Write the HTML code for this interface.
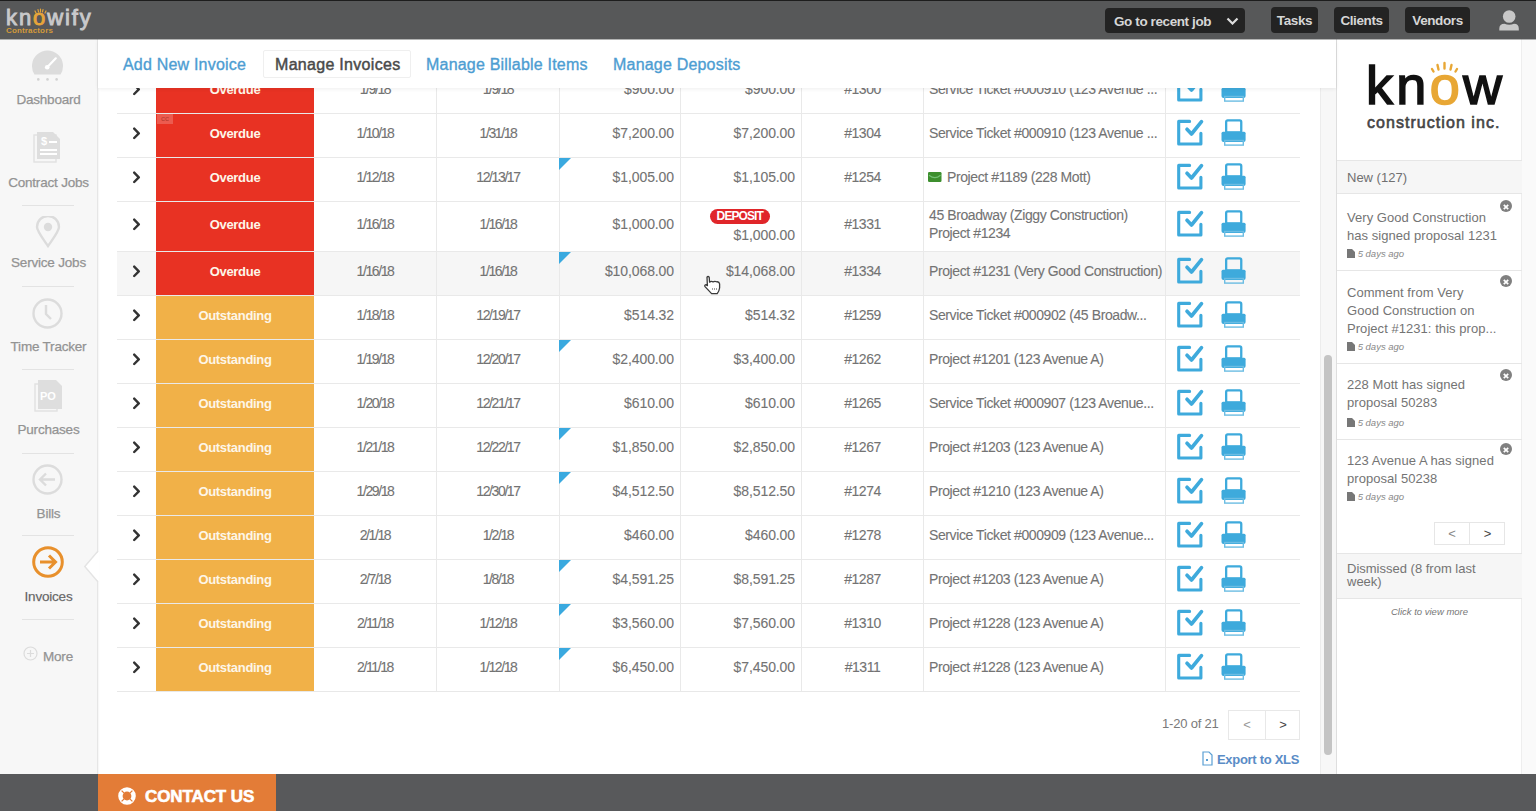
<!DOCTYPE html>
<html><head><meta charset="utf-8">
<style>
*{box-sizing:border-box;margin:0;padding:0}
html,body{width:1536px;height:811px;overflow:hidden;background:#fff;font-family:"Liberation Sans",sans-serif;color:#666}
.abs{position:absolute}
#topline{position:absolute;left:0;top:0;width:1536px;height:2px;background:#1d1d1d}
#header{position:absolute;left:0;top:1px;width:1536px;height:38px;background:#575859;box-shadow:0 1px 0 rgba(87,88,89,0.45);z-index:6}
.logo{position:absolute;left:6px;top:5px;font-size:22px;line-height:24px;font-weight:normal;-webkit-text-stroke:0.9px #c9c9cb;color:#c9c9cb;letter-spacing:1.9px}
.hbtn{position:absolute;top:6px;height:26px;background:#232323;border-radius:4px;color:#d6d6d6;font-size:13.5px;font-weight:bold;line-height:27px;text-align:center;letter-spacing:-0.4px}
#sidebar{position:absolute;left:0;top:39px;width:98px;height:735px;background:#f7f7f7;border-right:1px solid #e6e6e6;box-shadow:1px 0 1px rgba(0,0,0,0.03)}
.sb{position:absolute;left:0;width:97px;text-align:center;font-size:13.5px;color:#939393;-webkit-text-stroke:0.25px #939393;letter-spacing:-0.2px}
.sep{position:absolute;left:22px;width:52px;height:1px;background:#e3e3e3}
#tabs{position:absolute;left:98px;top:39px;width:1238px;height:49px;background:#fff;box-shadow:0 1px 4px rgba(0,0,0,0.07);z-index:5}
.tab{position:absolute;top:12px;height:28px;line-height:28px;font-size:16px;color:#4d9dd2;-webkit-text-stroke:0.35px #4d9dd2;letter-spacing:0.2px}
.tab.act{top:11px;border:1px solid #efefef;color:#4a4a4a;-webkit-text-stroke:0.45px #4a4a4a;border-radius:2px;letter-spacing:0.3px}
#tablewrap{position:absolute;left:98px;top:39px;width:1222px;height:735px;overflow:hidden}
.row{position:absolute;left:19px;width:1183px;border-top:1px solid #e9e9e9;font-size:14px;color:#737373;-webkit-text-stroke:0.1px #737373}
.row.hov{background:#f6f6f6}
.c{position:absolute;top:0;height:100%;display:flex;align-items:center;padding-bottom:5px}
.chev{left:0;width:39px;justify-content:center}
.st{left:39px;width:158px;justify-content:center;color:#fdf6e8;font-weight:bold;font-size:13px;top:0;height:100%;padding-bottom:4px;letter-spacing:-0.3px;-webkit-text-stroke:0}
.st.od{background:#e83223}
.st.os{background:#f1b148}
.d1{left:197px;width:122px;justify-content:center;letter-spacing:-1.4px}
.d2{left:319px;width:123px;justify-content:center;border-left:1px solid #e9e9e9;letter-spacing:-1.4px}
.amt{left:442px;width:122px;justify-content:flex-end;padding-right:7px;border-left:1px solid #e9e9e9;letter-spacing:-0.1px}
.bal{left:563px;width:121px;justify-content:flex-end;padding-right:6px;border-left:1px solid #e9e9e9;letter-spacing:-0.1px}
.num{left:684px;width:122px;justify-content:center;border-left:1px solid #e9e9e9;letter-spacing:-0.5px}
.desc{left:806px;width:243px;justify-content:flex-start;padding-left:5px;border-left:1px solid #e9e9e9;white-space:nowrap;letter-spacing:-0.4px}
.desc.two{line-height:18px}
.act{left:1048px;width:135px;border-left:1px solid #e9e9e9}
.ic{position:absolute;top:calc(50% - 17px)}
.ck{left:10px}
.pr{left:54px}
.tri{position:absolute;left:-1px;top:0;width:0;height:0;border-top:12px solid #3aa9df;border-right:12px solid transparent}
.bal.dep{flex-direction:column;align-items:flex-end;justify-content:flex-start}
.badge{display:inline-block;margin-top:7px;height:15px;line-height:15px;padding:0 7px;border-radius:8px;background:#e0262a;color:#fff;font-weight:bold;font-size:12px;letter-spacing:-0.9px;margin-right:25px;-webkit-text-stroke:0}
.dv{margin-top:3px}
#footrows{position:absolute;left:117px;top:691px;width:1183px;height:1px;background:#e8e8e8}
#scroll{position:absolute;left:1320px;top:88px;width:16px;height:686px;background:#f7f7f7;border-left:1px solid #ececec}
#thumb{position:absolute;left:1324px;top:355px;width:8px;height:400px;border-radius:4px;background:#c4c4c4}
#panel{position:absolute;left:1336px;top:39px;width:186px;height:735px;background:#fff;border-left:1px solid #dedede;border-right:1px solid #eeeeee}
#pstrip{position:absolute;left:1522px;top:39px;width:14px;height:735px;background:#fafafa}
.card{position:absolute;left:0;width:185px;border-top:1px solid #e6e6e6;font-size:13px;color:#747474;line-height:18px}
.card .txt{position:absolute;left:10px;top:12px;width:170px;letter-spacing:0.05px;white-space:nowrap}
.card .ago{position:absolute;left:10px;font-size:9.5px;font-style:italic;color:#888}
.card .x{position:absolute;left:163px;width:12px;height:12px;border-radius:50%;background:#808080}
#footer{position:absolute;left:0;top:774px;width:1536px;height:37px;background:#58595b}
#contact{position:absolute;left:98px;top:774px;width:178px;height:37px;background:#e37c37;color:#fff;font-weight:bold;font-size:17px}
</style></head><body>
<div id="topline"></div>
<div id="header">
  <div class="logo">kn<span style="color:#e6a53a;-webkit-text-stroke:0.9px #e6a53a">o</span>wify</div><svg class="abs" style="left:34px;top:7px" width="13" height="6" viewBox="0 0 13 6"><path d="M2 5L1 3M4.5 4L4 1.5M6.5 4V1M8.5 4L9 1.5M11 5L12 3" stroke="#e6a53a" stroke-width="1.2" stroke-linecap="round"/></svg><div class="abs" style="left:6px;top:26px;font-size:8px;font-weight:bold;color:#d49a3a;letter-spacing:0.15px;transform:scaleY(0.8);transform-origin:0 0">Contractors</div>
  <div class="hbtn" style="left:1105px;width:140px;top:7px;height:25px;line-height:27px;text-align:left;padding-left:9px">Go to recent job<svg style="position:absolute;left:121px;top:9px" width="13" height="8" viewBox="0 0 13 8"><path d="M1.5 1.5L6.5 6.5L11.5 1.5" fill="none" stroke="#ddd" stroke-width="2.2"/></svg></div>
  <div class="hbtn" style="left:1271px;width:47px">Tasks</div>
  <div class="hbtn" style="left:1334px;width:55px">Clients</div>
  <div class="hbtn" style="left:1405px;width:65px">Vendors</div>
  <svg class="abs" style="left:1499px;top:8px" width="21" height="22" viewBox="0 0 21 22"><circle cx="10.2" cy="7.5" r="6.3" fill="#c8c8c8"/><path d="M0.3 21.6V19.5Q0.3 15 5.5 14.8Q10.2 16.5 15 14.8Q19.8 15 19.8 19.5V21.6Z" fill="#c8c8c8"/></svg>
</div>

<div id="sidebar">
  <svg class="abs" style="left:31px;top:10px" width="34" height="34" viewBox="0 0 34 34"><path d="M3.47 25.4A15.5 15.5 0 1 1 29.53 25.4Z" fill="#dcdcdc"/><path d="M16.2 18.2L24.8 9.3" stroke="#fff" stroke-width="2.2" stroke-linecap="round"/><circle cx="16.2" cy="18.2" r="2.3" fill="#fff"/><circle cx="7.3" cy="30.4" r="1.3" fill="#d2d2d2"/><circle cx="16.5" cy="30.4" r="1.3" fill="#d2d2d2"/><circle cx="25.6" cy="30.4" r="1.3" fill="#d2d2d2"/></svg>
  <div class="sb" style="top:53px">Dashboard</div>
  <svg class="abs" style="left:33px;top:92px" width="30" height="32" viewBox="0 0 30 32"><rect x="1" y="4" width="22" height="27" fill="none" stroke="#e2e2e2" stroke-width="1.5"/><path d="M4 1H20L27 8V28H4Z" fill="#dedede"/><text x="8" y="14" font-size="11" font-weight="bold" fill="#fff" font-family="Liberation Sans">$</text><rect x="16" y="10" width="8" height="2" fill="#fff"/><rect x="7" y="18" width="17" height="2" fill="#fff"/><rect x="7" y="22" width="17" height="2" fill="#fff"/></svg>
  <div class="sb" style="top:136px">Contract Jobs</div>
  <div class="sep" style="top:166px"></div>
  <svg class="abs" style="left:35px;top:177px" width="26" height="32" viewBox="0 0 26 32"><path d="M13 30C6 20 2 15 2 11A11 11 0 0 1 24 11C24 15 20 20 13 30Z" fill="none" stroke="#dcdcdc" stroke-width="2.4"/><circle cx="13" cy="11" r="4.2" fill="#dcdcdc"/></svg>
  <div class="sb" style="top:216px">Service Jobs</div>
  <div class="sep" style="top:247px"></div>
  <svg class="abs" style="left:32px;top:259px" width="31" height="31" viewBox="0 0 31 31"><circle cx="15.5" cy="15.5" r="14" fill="none" stroke="#dcdcdc" stroke-width="2.4"/><path d="M14 7V16L19 21" fill="none" stroke="#dcdcdc" stroke-width="2.4"/></svg>
  <div class="sb" style="top:300px">Time Tracker</div>
  <div class="sep" style="top:330px"></div>
  <svg class="abs" style="left:34px;top:340px" width="29" height="33" viewBox="0 0 29 33"><rect x="1" y="5" width="22" height="27" fill="none" stroke="#e2e2e2" stroke-width="1.5"/><path d="M4 1H22L28 7V30H4Z" fill="#dedede"/><text x="6" y="21" font-size="11" font-weight="bold" fill="#fff" font-family="Liberation Sans">PO</text></svg>
  <div class="sb" style="top:383px">Purchases</div>
  <div class="sep" style="top:414px"></div>
  <svg class="abs" style="left:32px;top:425px" width="31" height="31" viewBox="0 0 31 31"><circle cx="15.5" cy="15.5" r="14" fill="none" stroke="#dcdcdc" stroke-width="2.4"/><path d="M23 15.5H9M14 9.5L8 15.5L14 21.5" fill="none" stroke="#dcdcdc" stroke-width="2.4"/></svg>
  <div class="sb" style="top:467px">Bills</div>
  <div class="sep" style="top:496px"></div>
  <svg class="abs" style="left:32px;top:507px" width="32" height="32" viewBox="0 0 32 32"><circle cx="16" cy="16" r="14.3" fill="none" stroke="#e8902c" stroke-width="3"/><path d="M8 16H23M17 9.5L23.5 16L17 22.5" fill="none" stroke="#e8902c" stroke-width="3"/></svg>
  <div class="sb" style="top:550px;color:#555">Invoices</div>
  <div class="sep" style="top:580px"></div>
  <svg class="abs" style="left:23px;top:607px" width="15" height="15" viewBox="0 0 15 15"><circle cx="7.5" cy="7.5" r="6.5" fill="none" stroke="#dcdcdc" stroke-width="1.2"/><path d="M7.5 4V11M4 7.5H11" stroke="#dcdcdc" stroke-width="1.2"/></svg>
  <div class="sb" style="top:610px;left:43px;width:auto;text-align:left">More</div>
</div>
<svg class="abs" style="left:84px;top:551px;z-index:3" width="15" height="31" viewBox="0 0 15 31"><path d="M15 0L0.8 15.5L15 31Z" fill="#fff"/><path d="M14 0L0.8 15.5L14 31" fill="none" stroke="#e4e4e4" stroke-width="1.4"/></svg>

<div id="tablewrap">
<div class="row" style="top:30px;height:44px"><div class="c chev"><svg width="9" height="13" viewBox="0 0 9 13"><path d="M2.2 1.6L6.8 6.3L2.2 11" fill="none" stroke="#333" stroke-width="2.4" stroke-linecap="round" stroke-linejoin="round"/></svg></div><div class="c st od">Overdue</div><div class="c d1">1/9/18</div><div class="c d2">1/9/18</div><div class="c amt"><span>$900.00</span></div><div class="c bal"><span>$900.00</span></div><div class="c num">#1300</div><div class="c desc">Service Ticket #000910 (123 Avenue ...</div><div class="c act"><svg class="ic ck" width="30" height="28" viewBox="0 0 30 28"><path d="M13.6 2.4H2.7V25H24.9V14.3" fill="none" stroke="#3eaadc" stroke-width="3.1" stroke-linejoin="round" stroke-linecap="round"/><path d="M11 10.2L15.5 15L25.5 2.6" fill="none" stroke="#3eaadc" stroke-width="3.6" stroke-linecap="round" stroke-linejoin="round"/></svg><svg class="ic pr" width="28" height="28" viewBox="0 0 28 28"><rect x="6.15" y="1.45" width="15.1" height="12" rx="1.5" fill="none" stroke="#3eaadc" stroke-width="2.3"/><path d="M1.5 14.2Q1.5 12.7 3 12.7H24.1Q25.6 12.7 25.6 14.2V21Q25.6 23 23.6 23H3.5Q1.5 23 1.5 21Z" fill="#3eaadc"/><rect x="4.7" y="21.5" width="18.6" height="4.6" fill="none" stroke="#6cbde3" stroke-width="1.4"/></svg></div></div>
<div class="row" style="top:74px;height:44px"><div class="c chev"><svg width="9" height="13" viewBox="0 0 9 13"><path d="M2.2 1.6L6.8 6.3L2.2 11" fill="none" stroke="#333" stroke-width="2.4" stroke-linecap="round" stroke-linejoin="round"/></svg></div><div class="c st od">Overdue</div><div class="c d1">1/10/18</div><div class="c d2">1/31/18</div><div class="c amt"><span>$7,200.00</span></div><div class="c bal"><span>$7,200.00</span></div><div class="c num">#1304</div><div class="c desc">Service Ticket #000910 (123 Avenue ...</div><div class="c act"><svg class="ic ck" width="30" height="28" viewBox="0 0 30 28"><path d="M13.6 2.4H2.7V25H24.9V14.3" fill="none" stroke="#3eaadc" stroke-width="3.1" stroke-linejoin="round" stroke-linecap="round"/><path d="M11 10.2L15.5 15L25.5 2.6" fill="none" stroke="#3eaadc" stroke-width="3.6" stroke-linecap="round" stroke-linejoin="round"/></svg><svg class="ic pr" width="28" height="28" viewBox="0 0 28 28"><rect x="6.15" y="1.45" width="15.1" height="12" rx="1.5" fill="none" stroke="#3eaadc" stroke-width="2.3"/><path d="M1.5 14.2Q1.5 12.7 3 12.7H24.1Q25.6 12.7 25.6 14.2V21Q25.6 23 23.6 23H3.5Q1.5 23 1.5 21Z" fill="#3eaadc"/><rect x="4.7" y="21.5" width="18.6" height="4.6" fill="none" stroke="#6cbde3" stroke-width="1.4"/></svg></div></div>
<div class="row" style="top:118px;height:44px"><div class="c chev"><svg width="9" height="13" viewBox="0 0 9 13"><path d="M2.2 1.6L6.8 6.3L2.2 11" fill="none" stroke="#333" stroke-width="2.4" stroke-linecap="round" stroke-linejoin="round"/></svg></div><div class="c st od">Overdue</div><div class="c d1">1/12/18</div><div class="c d2">12/13/17</div><div class="c amt"><i class="tri"></i><span>$1,005.00</span></div><div class="c bal"><span>$1,105.00</span></div><div class="c num">#1254</div><div class="c desc"><svg width="14" height="10" viewBox="0 0 14 10" style="margin-left:-1px;margin-right:5px"><rect x="0" y="0" width="13.5" height="10" rx="1.2" fill="#3d8f2e"/><path d="M1 3.2Q7 8 12.5 3.2" fill="none" stroke="#74c274" stroke-width="1.2"/></svg>Project #1189 (228 Mott)</div><div class="c act"><svg class="ic ck" width="30" height="28" viewBox="0 0 30 28"><path d="M13.6 2.4H2.7V25H24.9V14.3" fill="none" stroke="#3eaadc" stroke-width="3.1" stroke-linejoin="round" stroke-linecap="round"/><path d="M11 10.2L15.5 15L25.5 2.6" fill="none" stroke="#3eaadc" stroke-width="3.6" stroke-linecap="round" stroke-linejoin="round"/></svg><svg class="ic pr" width="28" height="28" viewBox="0 0 28 28"><rect x="6.15" y="1.45" width="15.1" height="12" rx="1.5" fill="none" stroke="#3eaadc" stroke-width="2.3"/><path d="M1.5 14.2Q1.5 12.7 3 12.7H24.1Q25.6 12.7 25.6 14.2V21Q25.6 23 23.6 23H3.5Q1.5 23 1.5 21Z" fill="#3eaadc"/><rect x="4.7" y="21.5" width="18.6" height="4.6" fill="none" stroke="#6cbde3" stroke-width="1.4"/></svg></div></div>
<div class="row" style="top:162px;height:50px"><div class="c chev"><svg width="9" height="13" viewBox="0 0 9 13"><path d="M2.2 1.6L6.8 6.3L2.2 11" fill="none" stroke="#333" stroke-width="2.4" stroke-linecap="round" stroke-linejoin="round"/></svg></div><div class="c st od">Overdue</div><div class="c d1">1/16/18</div><div class="c d2">1/16/18</div><div class="c amt"><span>$1,000.00</span></div><div class="c bal dep"><span class="badge">DEPOSIT</span><span class="dv">$1,000.00</span></div><div class="c num">#1331</div><div class="c desc two">45 Broadway (Ziggy Construction)<br>Project #1234</div><div class="c act"><svg class="ic ck" width="30" height="28" viewBox="0 0 30 28"><path d="M13.6 2.4H2.7V25H24.9V14.3" fill="none" stroke="#3eaadc" stroke-width="3.1" stroke-linejoin="round" stroke-linecap="round"/><path d="M11 10.2L15.5 15L25.5 2.6" fill="none" stroke="#3eaadc" stroke-width="3.6" stroke-linecap="round" stroke-linejoin="round"/></svg><svg class="ic pr" width="28" height="28" viewBox="0 0 28 28"><rect x="6.15" y="1.45" width="15.1" height="12" rx="1.5" fill="none" stroke="#3eaadc" stroke-width="2.3"/><path d="M1.5 14.2Q1.5 12.7 3 12.7H24.1Q25.6 12.7 25.6 14.2V21Q25.6 23 23.6 23H3.5Q1.5 23 1.5 21Z" fill="#3eaadc"/><rect x="4.7" y="21.5" width="18.6" height="4.6" fill="none" stroke="#6cbde3" stroke-width="1.4"/></svg></div></div>
<div class="row hov" style="top:212px;height:44px"><div class="c chev"><svg width="9" height="13" viewBox="0 0 9 13"><path d="M2.2 1.6L6.8 6.3L2.2 11" fill="none" stroke="#333" stroke-width="2.4" stroke-linecap="round" stroke-linejoin="round"/></svg></div><div class="c st od">Overdue</div><div class="c d1">1/16/18</div><div class="c d2">1/16/18</div><div class="c amt"><i class="tri"></i><span>$10,068.00</span></div><div class="c bal"><span>$14,068.00</span></div><div class="c num">#1334</div><div class="c desc">Project #1231 (Very Good Construction)</div><div class="c act"><svg class="ic ck" width="30" height="28" viewBox="0 0 30 28"><path d="M13.6 2.4H2.7V25H24.9V14.3" fill="none" stroke="#3eaadc" stroke-width="3.1" stroke-linejoin="round" stroke-linecap="round"/><path d="M11 10.2L15.5 15L25.5 2.6" fill="none" stroke="#3eaadc" stroke-width="3.6" stroke-linecap="round" stroke-linejoin="round"/></svg><svg class="ic pr" width="28" height="28" viewBox="0 0 28 28"><rect x="6.15" y="1.45" width="15.1" height="12" rx="1.5" fill="none" stroke="#3eaadc" stroke-width="2.3"/><path d="M1.5 14.2Q1.5 12.7 3 12.7H24.1Q25.6 12.7 25.6 14.2V21Q25.6 23 23.6 23H3.5Q1.5 23 1.5 21Z" fill="#3eaadc"/><rect x="4.7" y="21.5" width="18.6" height="4.6" fill="none" stroke="#6cbde3" stroke-width="1.4"/></svg></div></div>
<div class="row" style="top:256px;height:44px"><div class="c chev"><svg width="9" height="13" viewBox="0 0 9 13"><path d="M2.2 1.6L6.8 6.3L2.2 11" fill="none" stroke="#333" stroke-width="2.4" stroke-linecap="round" stroke-linejoin="round"/></svg></div><div class="c st os">Outstanding</div><div class="c d1">1/18/18</div><div class="c d2">12/19/17</div><div class="c amt"><span>$514.32</span></div><div class="c bal"><span>$514.32</span></div><div class="c num">#1259</div><div class="c desc">Service Ticket #000902 (45 Broadw...</div><div class="c act"><svg class="ic ck" width="30" height="28" viewBox="0 0 30 28"><path d="M13.6 2.4H2.7V25H24.9V14.3" fill="none" stroke="#3eaadc" stroke-width="3.1" stroke-linejoin="round" stroke-linecap="round"/><path d="M11 10.2L15.5 15L25.5 2.6" fill="none" stroke="#3eaadc" stroke-width="3.6" stroke-linecap="round" stroke-linejoin="round"/></svg><svg class="ic pr" width="28" height="28" viewBox="0 0 28 28"><rect x="6.15" y="1.45" width="15.1" height="12" rx="1.5" fill="none" stroke="#3eaadc" stroke-width="2.3"/><path d="M1.5 14.2Q1.5 12.7 3 12.7H24.1Q25.6 12.7 25.6 14.2V21Q25.6 23 23.6 23H3.5Q1.5 23 1.5 21Z" fill="#3eaadc"/><rect x="4.7" y="21.5" width="18.6" height="4.6" fill="none" stroke="#6cbde3" stroke-width="1.4"/></svg></div></div>
<div class="row" style="top:300px;height:44px"><div class="c chev"><svg width="9" height="13" viewBox="0 0 9 13"><path d="M2.2 1.6L6.8 6.3L2.2 11" fill="none" stroke="#333" stroke-width="2.4" stroke-linecap="round" stroke-linejoin="round"/></svg></div><div class="c st os">Outstanding</div><div class="c d1">1/19/18</div><div class="c d2">12/20/17</div><div class="c amt"><i class="tri"></i><span>$2,400.00</span></div><div class="c bal"><span>$3,400.00</span></div><div class="c num">#1262</div><div class="c desc">Project #1201 (123 Avenue A)</div><div class="c act"><svg class="ic ck" width="30" height="28" viewBox="0 0 30 28"><path d="M13.6 2.4H2.7V25H24.9V14.3" fill="none" stroke="#3eaadc" stroke-width="3.1" stroke-linejoin="round" stroke-linecap="round"/><path d="M11 10.2L15.5 15L25.5 2.6" fill="none" stroke="#3eaadc" stroke-width="3.6" stroke-linecap="round" stroke-linejoin="round"/></svg><svg class="ic pr" width="28" height="28" viewBox="0 0 28 28"><rect x="6.15" y="1.45" width="15.1" height="12" rx="1.5" fill="none" stroke="#3eaadc" stroke-width="2.3"/><path d="M1.5 14.2Q1.5 12.7 3 12.7H24.1Q25.6 12.7 25.6 14.2V21Q25.6 23 23.6 23H3.5Q1.5 23 1.5 21Z" fill="#3eaadc"/><rect x="4.7" y="21.5" width="18.6" height="4.6" fill="none" stroke="#6cbde3" stroke-width="1.4"/></svg></div></div>
<div class="row" style="top:344px;height:44px"><div class="c chev"><svg width="9" height="13" viewBox="0 0 9 13"><path d="M2.2 1.6L6.8 6.3L2.2 11" fill="none" stroke="#333" stroke-width="2.4" stroke-linecap="round" stroke-linejoin="round"/></svg></div><div class="c st os">Outstanding</div><div class="c d1">1/20/18</div><div class="c d2">12/21/17</div><div class="c amt"><span>$610.00</span></div><div class="c bal"><span>$610.00</span></div><div class="c num">#1265</div><div class="c desc">Service Ticket #000907 (123 Avenue...</div><div class="c act"><svg class="ic ck" width="30" height="28" viewBox="0 0 30 28"><path d="M13.6 2.4H2.7V25H24.9V14.3" fill="none" stroke="#3eaadc" stroke-width="3.1" stroke-linejoin="round" stroke-linecap="round"/><path d="M11 10.2L15.5 15L25.5 2.6" fill="none" stroke="#3eaadc" stroke-width="3.6" stroke-linecap="round" stroke-linejoin="round"/></svg><svg class="ic pr" width="28" height="28" viewBox="0 0 28 28"><rect x="6.15" y="1.45" width="15.1" height="12" rx="1.5" fill="none" stroke="#3eaadc" stroke-width="2.3"/><path d="M1.5 14.2Q1.5 12.7 3 12.7H24.1Q25.6 12.7 25.6 14.2V21Q25.6 23 23.6 23H3.5Q1.5 23 1.5 21Z" fill="#3eaadc"/><rect x="4.7" y="21.5" width="18.6" height="4.6" fill="none" stroke="#6cbde3" stroke-width="1.4"/></svg></div></div>
<div class="row" style="top:388px;height:44px"><div class="c chev"><svg width="9" height="13" viewBox="0 0 9 13"><path d="M2.2 1.6L6.8 6.3L2.2 11" fill="none" stroke="#333" stroke-width="2.4" stroke-linecap="round" stroke-linejoin="round"/></svg></div><div class="c st os">Outstanding</div><div class="c d1">1/21/18</div><div class="c d2">12/22/17</div><div class="c amt"><i class="tri"></i><span>$1,850.00</span></div><div class="c bal"><span>$2,850.00</span></div><div class="c num">#1267</div><div class="c desc">Project #1203 (123 Avenue A)</div><div class="c act"><svg class="ic ck" width="30" height="28" viewBox="0 0 30 28"><path d="M13.6 2.4H2.7V25H24.9V14.3" fill="none" stroke="#3eaadc" stroke-width="3.1" stroke-linejoin="round" stroke-linecap="round"/><path d="M11 10.2L15.5 15L25.5 2.6" fill="none" stroke="#3eaadc" stroke-width="3.6" stroke-linecap="round" stroke-linejoin="round"/></svg><svg class="ic pr" width="28" height="28" viewBox="0 0 28 28"><rect x="6.15" y="1.45" width="15.1" height="12" rx="1.5" fill="none" stroke="#3eaadc" stroke-width="2.3"/><path d="M1.5 14.2Q1.5 12.7 3 12.7H24.1Q25.6 12.7 25.6 14.2V21Q25.6 23 23.6 23H3.5Q1.5 23 1.5 21Z" fill="#3eaadc"/><rect x="4.7" y="21.5" width="18.6" height="4.6" fill="none" stroke="#6cbde3" stroke-width="1.4"/></svg></div></div>
<div class="row" style="top:432px;height:44px"><div class="c chev"><svg width="9" height="13" viewBox="0 0 9 13"><path d="M2.2 1.6L6.8 6.3L2.2 11" fill="none" stroke="#333" stroke-width="2.4" stroke-linecap="round" stroke-linejoin="round"/></svg></div><div class="c st os">Outstanding</div><div class="c d1">1/29/18</div><div class="c d2">12/30/17</div><div class="c amt"><i class="tri"></i><span>$4,512.50</span></div><div class="c bal"><span>$8,512.50</span></div><div class="c num">#1274</div><div class="c desc">Project #1210 (123 Avenue A)</div><div class="c act"><svg class="ic ck" width="30" height="28" viewBox="0 0 30 28"><path d="M13.6 2.4H2.7V25H24.9V14.3" fill="none" stroke="#3eaadc" stroke-width="3.1" stroke-linejoin="round" stroke-linecap="round"/><path d="M11 10.2L15.5 15L25.5 2.6" fill="none" stroke="#3eaadc" stroke-width="3.6" stroke-linecap="round" stroke-linejoin="round"/></svg><svg class="ic pr" width="28" height="28" viewBox="0 0 28 28"><rect x="6.15" y="1.45" width="15.1" height="12" rx="1.5" fill="none" stroke="#3eaadc" stroke-width="2.3"/><path d="M1.5 14.2Q1.5 12.7 3 12.7H24.1Q25.6 12.7 25.6 14.2V21Q25.6 23 23.6 23H3.5Q1.5 23 1.5 21Z" fill="#3eaadc"/><rect x="4.7" y="21.5" width="18.6" height="4.6" fill="none" stroke="#6cbde3" stroke-width="1.4"/></svg></div></div>
<div class="row" style="top:476px;height:44px"><div class="c chev"><svg width="9" height="13" viewBox="0 0 9 13"><path d="M2.2 1.6L6.8 6.3L2.2 11" fill="none" stroke="#333" stroke-width="2.4" stroke-linecap="round" stroke-linejoin="round"/></svg></div><div class="c st os">Outstanding</div><div class="c d1">2/1/18</div><div class="c d2">1/2/18</div><div class="c amt"><span>$460.00</span></div><div class="c bal"><span>$460.00</span></div><div class="c num">#1278</div><div class="c desc">Service Ticket #000909 (123 Avenue...</div><div class="c act"><svg class="ic ck" width="30" height="28" viewBox="0 0 30 28"><path d="M13.6 2.4H2.7V25H24.9V14.3" fill="none" stroke="#3eaadc" stroke-width="3.1" stroke-linejoin="round" stroke-linecap="round"/><path d="M11 10.2L15.5 15L25.5 2.6" fill="none" stroke="#3eaadc" stroke-width="3.6" stroke-linecap="round" stroke-linejoin="round"/></svg><svg class="ic pr" width="28" height="28" viewBox="0 0 28 28"><rect x="6.15" y="1.45" width="15.1" height="12" rx="1.5" fill="none" stroke="#3eaadc" stroke-width="2.3"/><path d="M1.5 14.2Q1.5 12.7 3 12.7H24.1Q25.6 12.7 25.6 14.2V21Q25.6 23 23.6 23H3.5Q1.5 23 1.5 21Z" fill="#3eaadc"/><rect x="4.7" y="21.5" width="18.6" height="4.6" fill="none" stroke="#6cbde3" stroke-width="1.4"/></svg></div></div>
<div class="row" style="top:520px;height:44px"><div class="c chev"><svg width="9" height="13" viewBox="0 0 9 13"><path d="M2.2 1.6L6.8 6.3L2.2 11" fill="none" stroke="#333" stroke-width="2.4" stroke-linecap="round" stroke-linejoin="round"/></svg></div><div class="c st os">Outstanding</div><div class="c d1">2/7/18</div><div class="c d2">1/8/18</div><div class="c amt"><i class="tri"></i><span>$4,591.25</span></div><div class="c bal"><span>$8,591.25</span></div><div class="c num">#1287</div><div class="c desc">Project #1203 (123 Avenue A)</div><div class="c act"><svg class="ic ck" width="30" height="28" viewBox="0 0 30 28"><path d="M13.6 2.4H2.7V25H24.9V14.3" fill="none" stroke="#3eaadc" stroke-width="3.1" stroke-linejoin="round" stroke-linecap="round"/><path d="M11 10.2L15.5 15L25.5 2.6" fill="none" stroke="#3eaadc" stroke-width="3.6" stroke-linecap="round" stroke-linejoin="round"/></svg><svg class="ic pr" width="28" height="28" viewBox="0 0 28 28"><rect x="6.15" y="1.45" width="15.1" height="12" rx="1.5" fill="none" stroke="#3eaadc" stroke-width="2.3"/><path d="M1.5 14.2Q1.5 12.7 3 12.7H24.1Q25.6 12.7 25.6 14.2V21Q25.6 23 23.6 23H3.5Q1.5 23 1.5 21Z" fill="#3eaadc"/><rect x="4.7" y="21.5" width="18.6" height="4.6" fill="none" stroke="#6cbde3" stroke-width="1.4"/></svg></div></div>
<div class="row" style="top:564px;height:44px"><div class="c chev"><svg width="9" height="13" viewBox="0 0 9 13"><path d="M2.2 1.6L6.8 6.3L2.2 11" fill="none" stroke="#333" stroke-width="2.4" stroke-linecap="round" stroke-linejoin="round"/></svg></div><div class="c st os">Outstanding</div><div class="c d1">2/11/18</div><div class="c d2">1/12/18</div><div class="c amt"><i class="tri"></i><span>$3,560.00</span></div><div class="c bal"><span>$7,560.00</span></div><div class="c num">#1310</div><div class="c desc">Project #1228 (123 Avenue A)</div><div class="c act"><svg class="ic ck" width="30" height="28" viewBox="0 0 30 28"><path d="M13.6 2.4H2.7V25H24.9V14.3" fill="none" stroke="#3eaadc" stroke-width="3.1" stroke-linejoin="round" stroke-linecap="round"/><path d="M11 10.2L15.5 15L25.5 2.6" fill="none" stroke="#3eaadc" stroke-width="3.6" stroke-linecap="round" stroke-linejoin="round"/></svg><svg class="ic pr" width="28" height="28" viewBox="0 0 28 28"><rect x="6.15" y="1.45" width="15.1" height="12" rx="1.5" fill="none" stroke="#3eaadc" stroke-width="2.3"/><path d="M1.5 14.2Q1.5 12.7 3 12.7H24.1Q25.6 12.7 25.6 14.2V21Q25.6 23 23.6 23H3.5Q1.5 23 1.5 21Z" fill="#3eaadc"/><rect x="4.7" y="21.5" width="18.6" height="4.6" fill="none" stroke="#6cbde3" stroke-width="1.4"/></svg></div></div>
<div class="row" style="top:608px;height:44px"><div class="c chev"><svg width="9" height="13" viewBox="0 0 9 13"><path d="M2.2 1.6L6.8 6.3L2.2 11" fill="none" stroke="#333" stroke-width="2.4" stroke-linecap="round" stroke-linejoin="round"/></svg></div><div class="c st os">Outstanding</div><div class="c d1">2/11/18</div><div class="c d2">1/12/18</div><div class="c amt"><i class="tri"></i><span>$6,450.00</span></div><div class="c bal"><span>$7,450.00</span></div><div class="c num">#1311</div><div class="c desc">Project #1228 (123 Avenue A)</div><div class="c act"><svg class="ic ck" width="30" height="28" viewBox="0 0 30 28"><path d="M13.6 2.4H2.7V25H24.9V14.3" fill="none" stroke="#3eaadc" stroke-width="3.1" stroke-linejoin="round" stroke-linecap="round"/><path d="M11 10.2L15.5 15L25.5 2.6" fill="none" stroke="#3eaadc" stroke-width="3.6" stroke-linecap="round" stroke-linejoin="round"/></svg><svg class="ic pr" width="28" height="28" viewBox="0 0 28 28"><rect x="6.15" y="1.45" width="15.1" height="12" rx="1.5" fill="none" stroke="#3eaadc" stroke-width="2.3"/><path d="M1.5 14.2Q1.5 12.7 3 12.7H24.1Q25.6 12.7 25.6 14.2V21Q25.6 23 23.6 23H3.5Q1.5 23 1.5 21Z" fill="#3eaadc"/><rect x="4.7" y="21.5" width="18.6" height="4.6" fill="none" stroke="#6cbde3" stroke-width="1.4"/></svg></div></div>
</div>
<div id="footrows"></div>
<svg class="abs" style="left:703px;top:275px;z-index:4" width="18" height="20" viewBox="0 0 18 20"><path d="M4 2.2Q5 0.8 6.2 2.2L6.6 7.2Q8 5.8 10 6.8Q12 5.8 13.6 6.8Q16.2 6.4 16.6 8.8L16.6 13Q16.2 16 14.2 18.6L8.6 18.6L2 11.6Q1.2 10 3 9.6L4.4 10.6Z" fill="#fff" stroke="#3a3a3a" stroke-width="1.3" stroke-linejoin="round"/><path d="M9.5 13V15M11.5 13V15M13.5 13V15" stroke="#888" stroke-width="0.8"/></svg>
<div class="abs" style="left:157px;top:114px;width:16px;height:10px;background:rgba(255,255,255,0.2);font-size:8px;line-height:10px;color:rgba(120,20,10,0.5);z-index:2;text-align:center">cc</div>

<div id="tabs">
  <div class="tab" style="left:25px">Add New Invoice</div>
  <div class="tab act" style="left:165px;width:148px;padding-left:11px">Manage Invoices</div>
  <div class="tab" style="left:328px">Manage Billable Items</div>
  <div class="tab" style="left:515px">Manage Deposits</div>
</div>

<div id="scroll"></div>
<div id="thumb"></div>

<div id="panel">
  <div class="abs" style="left:29px;top:16px;font-size:54px;font-weight:normal;-webkit-text-stroke:1.6px #111;color:#111;letter-spacing:3.3px;line-height:60px">kn<span style="color:#e8a735;-webkit-text-stroke:1.6px #e8a735">o</span>w</div>
  <svg class="abs" style="left:93px;top:22px" width="30" height="14" viewBox="0 0 30 14"><path d="M3.5 10.5L2 8M8.5 8.5L7.5 4M14.5 7.5V2M20.5 8.5L21.5 4M25.5 10.5L27 8" stroke="#e8a735" stroke-width="2.4" stroke-linecap="round"/></svg>
  <div class="abs" style="left:30px;top:75px;font-size:16px;font-weight:normal;-webkit-text-stroke:0.6px #444;color:#444;letter-spacing:1.05px">construction inc.</div>
  <div class="abs" style="left:0;top:121px;width:185px;height:33px;background:#f6f6f6;border-top:1px solid #e6e6e6;font-size:13px;color:#707070;padding:9px 0 0 10px">New (127)</div>
  <div class="card" style="top:154px;height:77px"><div class="txt" style="top:15px">Very Good Construction<br>has signed proposal 1231</div><div class="ago" style="top:51px"><svg width="8" height="9" viewBox="0 0 8 9" style="vertical-align:-1px"><path d="M0 0H5L8 3V9H0Z" fill="#777"/></svg> 5 days ago</div><div class="x" style="top:6px"><svg width="12" height="12" viewBox="0 0 12 12"><path d="M3.8 3.8L8.2 8.2M8.2 3.8L3.8 8.2" stroke="#fff" stroke-width="1.7"/></svg></div></div>
  <div class="card" style="top:231px;height:93px"><div class="txt" style="top:13px">Comment from Very<br>Good Construction on<br>Project #1231: this prop...</div><div class="ago" style="top:67px"><svg width="8" height="9" viewBox="0 0 8 9" style="vertical-align:-1px"><path d="M0 0H5L8 3V9H0Z" fill="#777"/></svg> 5 days ago</div><div class="x" style="top:4px"><svg width="12" height="12" viewBox="0 0 12 12"><path d="M3.8 3.8L8.2 8.2M8.2 3.8L3.8 8.2" stroke="#fff" stroke-width="1.7"/></svg></div></div>
  <div class="card" style="top:324px;height:76px"><div class="txt" style="top:12px">228 Mott has signed<br>proposal 50283</div><div class="ago" style="top:50px"><svg width="8" height="9" viewBox="0 0 8 9" style="vertical-align:-1px"><path d="M0 0H5L8 3V9H0Z" fill="#777"/></svg> 5 days ago</div><div class="x" style="top:5px"><svg width="12" height="12" viewBox="0 0 12 12"><path d="M3.8 3.8L8.2 8.2M8.2 3.8L3.8 8.2" stroke="#fff" stroke-width="1.7"/></svg></div></div>
  <div class="card" style="top:400px;height:114px"><div class="txt" style="top:12px">123 Avenue A has signed<br>proposal 50238</div><div class="ago" style="top:48px"><svg width="8" height="9" viewBox="0 0 8 9" style="vertical-align:-1px"><path d="M0 0H5L8 3V9H0Z" fill="#777"/></svg> 5 days ago</div><div class="x" style="top:3px"><svg width="12" height="12" viewBox="0 0 12 12"><path d="M3.8 3.8L8.2 8.2M8.2 3.8L3.8 8.2" stroke="#fff" stroke-width="1.7"/></svg></div>
    <div class="abs" style="left:97px;top:82px;width:71px;height:23px;border:1px solid #e6e6e6;color:#888;font-size:13px"><div class="abs" style="left:0;top:0;width:35px;height:21px;border-right:1px solid #e6e6e6;text-align:center;line-height:21px">&lt;</div><div class="abs" style="left:35px;top:0;width:35px;height:21px;text-align:center;line-height:21px;color:#444">&gt;</div></div>
  </div>
  <div class="abs" style="left:0;top:514px;width:185px;height:46px;background:#f6f6f6;border-top:1px solid #e6e6e6;border-bottom:1px solid #e6e6e6;font-size:13px;color:#747474;padding:8px 0 0 10px;line-height:13px">Dismissed (8 from last<br>week)</div>
  <div class="abs" style="left:0;top:567px;width:185px;text-align:center;font-size:9.5px;font-style:italic;color:#777">Click to view more</div>
</div>
<div id="pstrip"></div>

<div id="footer"></div>
<div id="contact"><svg class="abs" style="left:19px;top:12px" width="20" height="20" viewBox="0 0 20 20"><circle cx="10" cy="10" r="6.6" fill="none" stroke="#fff" stroke-width="4.4"/><path d="M4.6 4.6L7.4 7.4M15.4 4.6L12.6 7.4M4.6 15.4L7.4 12.6M15.4 15.4L12.6 12.6" stroke="#e37c37" stroke-width="1.3"/></svg><div class="abs" style="left:47px;top:13px;letter-spacing:-0.1px;-webkit-text-stroke:0.6px #fff">CONTACT US</div></div>
<div class="abs" style="left:1202px;top:751px"><svg width="11" height="15" viewBox="0 0 11 15"><path d="M1 1H7L10 4V14H1Z" fill="none" stroke="#5a9fd4" stroke-width="1.2"/><path d="M4 8L6 10M6 8L4 10" stroke="#5a9fd4" stroke-width="1"/></svg></div>
<div class="abs" style="left:1217px;top:752px;font-size:13px;font-weight:bold;color:#5a8cc6;letter-spacing:-0.3px">Export to XLS</div>
<div class="abs" style="left:1162px;top:716px;font-size:13px;color:#7a7a7a;letter-spacing:-0.2px">1-20 of 21</div>
<div class="abs" style="left:1228px;top:710px;width:72px;height:30px;border:1px solid #e8e8e8"><div class="abs" style="left:0;top:0;width:37px;height:28px;border-right:1px solid #e8e8e8;text-align:center;line-height:28px;color:#999;font-size:13px">&lt;</div><div class="abs" style="left:37px;top:0;width:34px;height:28px;text-align:center;line-height:28px;color:#444;font-size:13px">&gt;</div></div>
</body></html>
